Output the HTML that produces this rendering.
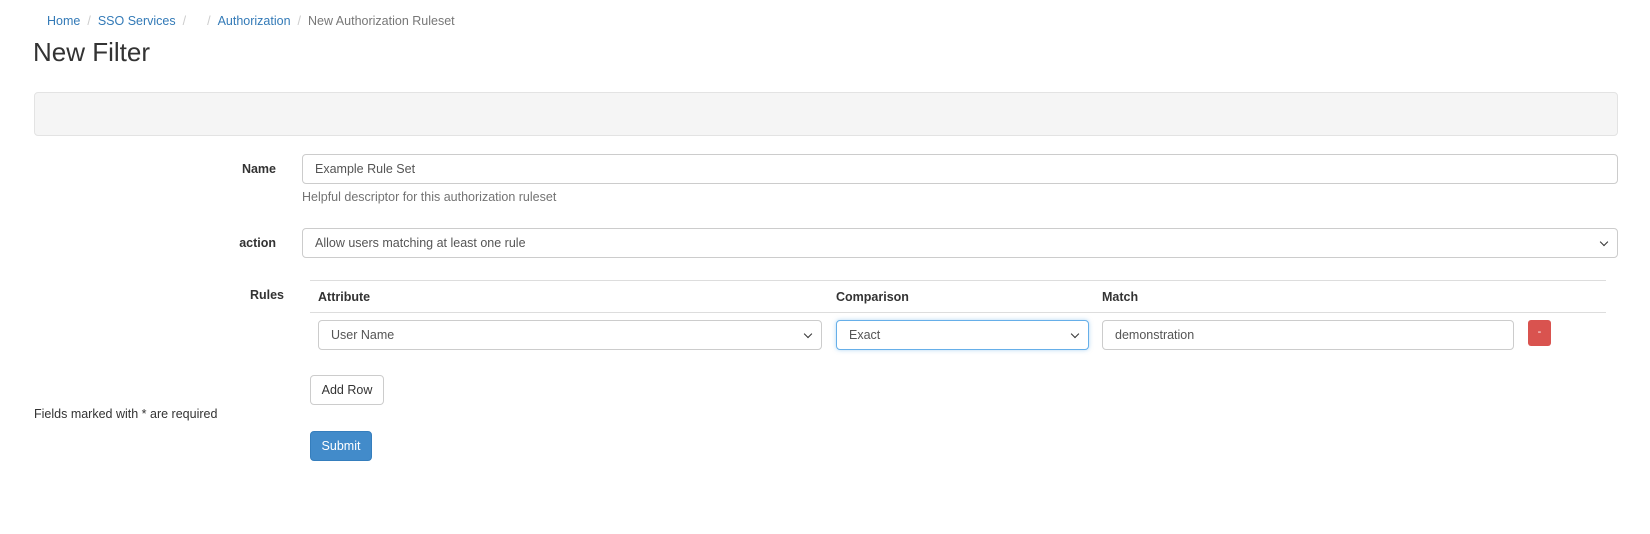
<!DOCTYPE html>
<html><head><style>
*{box-sizing:border-box}
body{margin:0;width:1650px;height:534px;background:#fff;font-family:"Liberation Sans",sans-serif;font-size:12.5px;color:#333;position:relative;overflow:hidden}
.a{position:absolute}
.bc{left:47px;top:14px;color:#777}
.bc a{color:#337ab7;text-decoration:none}
.bc .s{color:#ccc;padding:0 7px}
h1{position:absolute;left:33px;top:37px;margin:0;font-size:26px;font-weight:400;color:#333}
.well{left:34px;top:92px;width:1584px;height:44px;background:#f5f5f5;border:1px solid #e3e3e3;border-radius:4px}
.lbl{font-weight:bold;text-align:right;width:120px}
.inp{border:1px solid #ccc;border-radius:4px;height:30px;padding:0 12px;line-height:28px;color:#555;background:#fff}
.sel::after{content:"";position:absolute;right:10px;top:10px;width:5px;height:5px;border-right:1.5px solid #333;border-bottom:1.5px solid #333;transform:rotate(45deg)}
.line{height:1px;background:#ddd}
.btn{border:1px solid #ccc;border-radius:4px;background:#fff;color:#333;text-align:center;line-height:28px}
</style></head><body>
<div class="a bc"><a>Home</a><span class="s">/</span><a>SSO Services</a><span class="s">/</span>&nbsp;&nbsp;<span class="s">/</span><a>Authorization</a><span class="s">/</span>New Authorization Ruleset</div>
<h1>New Filter</h1>
<div class="a well"></div>
<div class="a lbl" style="left:156px;top:162px">Name</div>
<div class="a inp" style="left:302px;top:154px;width:1316px">Example Rule Set</div>
<div class="a" style="left:302px;top:190px;color:#737373">Helpful descriptor for this authorization ruleset</div>
<div class="a lbl" style="left:156px;top:236px">action</div>
<div class="a inp sel" style="left:302px;top:228px;width:1316px">Allow users matching at least one rule</div>
<div class="a lbl" style="left:164px;top:288px">Rules</div>
<div class="a line" style="left:310px;top:280px;width:1296px"></div>
<div class="a" style="left:318px;top:290px;font-weight:bold">Attribute</div>
<div class="a" style="left:836px;top:290px;font-weight:bold">Comparison</div>
<div class="a" style="left:1102px;top:290px;font-weight:bold">Match</div>
<div class="a line" style="left:310px;top:312px;width:1296px"></div>
<div class="a inp sel" style="left:318px;top:320px;width:504px">User Name</div>
<div class="a inp sel" style="left:836px;top:320px;width:253px;border-color:#66afe9;box-shadow:0 0 4px rgba(102,175,233,.5)">Exact</div>
<div class="a inp" style="left:1102px;top:320px;width:412px">demonstration</div>
<div class="a" style="left:1528px;top:320px;width:23px;height:26px;background:#d9534f;border-radius:3px;color:#fff;text-align:center;line-height:24px;font-size:11px">-</div>
<div class="a btn" style="left:310px;top:375px;width:74px;height:30px">Add Row</div>
<div class="a" style="left:34px;top:407px">Fields marked with * are required</div>
<div class="a btn" style="left:310px;top:431px;width:62px;height:30px;background:#428bca;border-color:#357ebd;color:#fff">Submit</div>
</body></html>
